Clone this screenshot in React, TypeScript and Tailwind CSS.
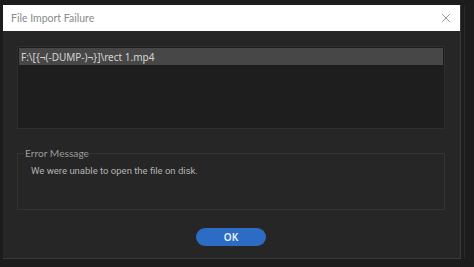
import React from "react";

export default function App() {
  const font = { fontFamily: '"Noto Sans", "Open Sans", sans-serif' };
  const lato = { fontFamily: 'Lato, "Noto Sans", sans-serif' };
  const roboto = { fontFamily: 'Roboto, "Noto Sans", sans-serif' };
  return (
    <div className="w-[474px] h-[267px] bg-[#1c1c1c] overflow-hidden flex" style={font}>
      <div className="mt-[5px] ml-[3px] w-[458px] h-[254px] flex flex-col border-r border-b border-[#3a3a3a] bg-[#262626]">
        <div className="h-[26px] shrink-0 bg-white flex items-center justify-between pl-[8px] pr-[9px]">
          <span className="text-[10.5px] text-[#8a8a8a] leading-none" style={lato}>File Import Failure</span>
          <svg width="10" height="10" viewBox="0 0 10 10" className="block">
            <path d="M1 1 L9 9 M9 1 L1 9" stroke="#9a9a9a" strokeWidth="1" fill="none" />
          </svg>
        </div>
        <div className="flex-1 flex flex-col pt-[15px] pl-[14px] pr-[15px] pb-[12px]">
          <div className="h-[83px] bg-[#1e1e1e] border border-[#2e2e2e] p-px">
            <div className="h-[17px] bg-[#474747] flex items-center pl-[2px]">
              <span className="text-[10px] text-[#d4d4d4] leading-none">F:\[{"{"}¬(-DUMP-)¬{"}"}]\rect 1.mp4</span>
            </div>
          </div>
          <fieldset className="mt-[17px] h-[64px] border border-[#343434]">
            <legend className="ml-[6px] px-px text-[10.2px] leading-[14px] text-[#9a9a9a]" style={lato}>Error Message</legend>
            <div className="pl-[13px] mt-[4px] text-[9.5px] leading-[14px] text-[#b4b4b4]" style={roboto}>We were unable to open the file on disk.</div>
          </fieldset>
          <div className="mt-auto flex justify-center">
            <button className="w-[70px] h-[18px] rounded-full bg-[#2c6cc4] text-[10px] font-semibold text-[#e8eef8] leading-none">
              OK
            </button>
          </div>
        </div>
      </div>
      <div className="ml-[3px] mt-[5px] w-px h-[254px] bg-[#2a2a2a]" />
    </div>
  );
}
